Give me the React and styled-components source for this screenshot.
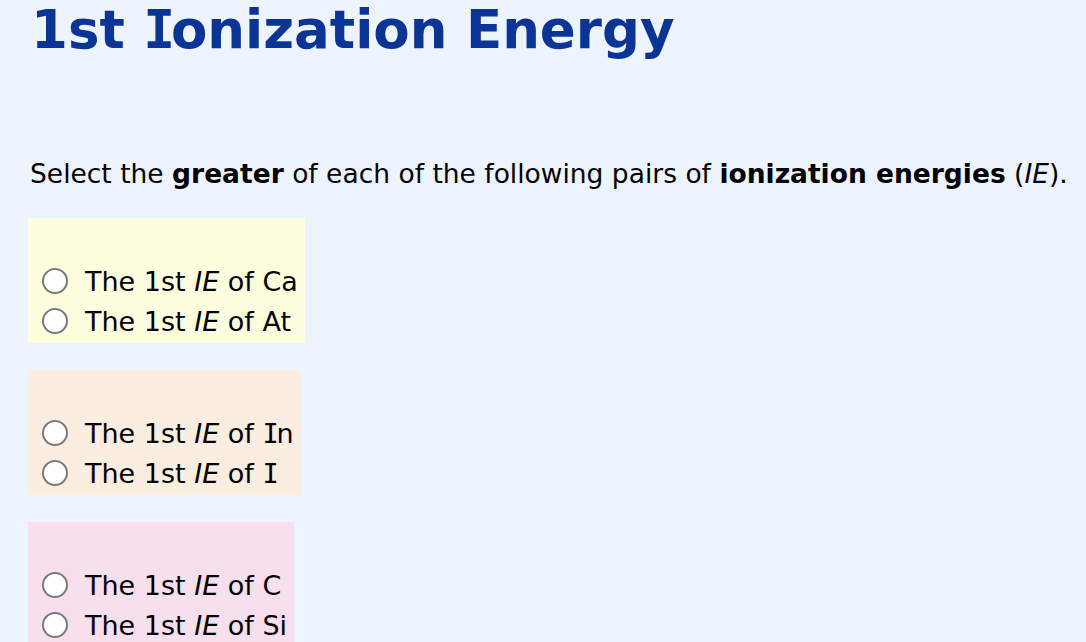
import React from "react"
import styled, { createGlobalStyle } from "styled-components"

const GlobalStyle = createGlobalStyle`
  html, body {
    margin: 0;
    padding: 0;
    background: #edf4ff;
  }
  body {
    font-family: "DejaVu Sans", Verdana, sans-serif;
    color: #000;
  }
`

const pairs = [
  { bg: "#ffffe0", options: ["Ca", "At"] },
  { bg: "#fbede0", options: ["In", "I"] },
  { bg: "#f8dfee", options: ["C", "Si"] },
]

// Verdana's capital I carries serifs; DejaVu Sans Mono's does too
const withSerifI = (text) =>
  text.split(/(I)/).map((part, i) =>
    part === "I" ? <SerifI key={i}>I</SerifI> : part
  )

const App = () => {
  return (
    <Page>
      <GlobalStyle />
      <Title>1st {withSerifI("Ionization")} Energy</Title>
      <Intro>
        Select the <b>greater</b> of each of the following pairs of{" "}
        <b>ionization energies</b> (<i>IE</i>).
      </Intro>
      <Questions>
        {pairs.map((pair, i) => (
          <Card key={i} $bg={pair.bg}>
            {pair.options.map((el) => (
              <Option key={el}>
                <Radio type="radio" name={"q" + i} />
                <span>
                  The 1st <i>IE</i> of {withSerifI(el)}
                </span>
              </Option>
            ))}
          </Card>
        ))}
      </Questions>
    </Page>
  )
}

export default App

const Page = styled.div`
  padding: 0 0 0 28px;
`

const SerifI = styled.span`
  font-family: "DejaVu Sans Mono", monospace;
  letter-spacing: -0.08em;
`

const Title = styled.h1`
  margin: 0;
  font-size: 53px;
  line-height: 60px;
  font-weight: bold;
  color: #0b3594;
  padding-left: 3px;
`

const Intro = styled.p`
  margin: 99px 0 0 2px;
  font-size: 26.5px;
  line-height: 30px;
  white-space: nowrap;
`

const Questions = styled.div`
  display: flex;
  flex-direction: column;
  align-items: flex-start;
  gap: 27px;
  margin-top: 29px;
`

const Card = styled.div`
  background: ${(p) => p.$bg};
  padding: 43px 7px 2px 14px;
  display: flex;
  flex-direction: column;
`

const Option = styled.label`
  display: flex;
  align-items: center;
  gap: 17px;
  height: 40px;
  font-size: 27px;
`

const Radio = styled.input`
  appearance: none;
  margin: 0;
  width: 26px;
  height: 26px;
  border-radius: 50%;
  border: 2px solid #7b7b7b;
  background: #fff;
  box-sizing: border-box;
  flex: none;
`
